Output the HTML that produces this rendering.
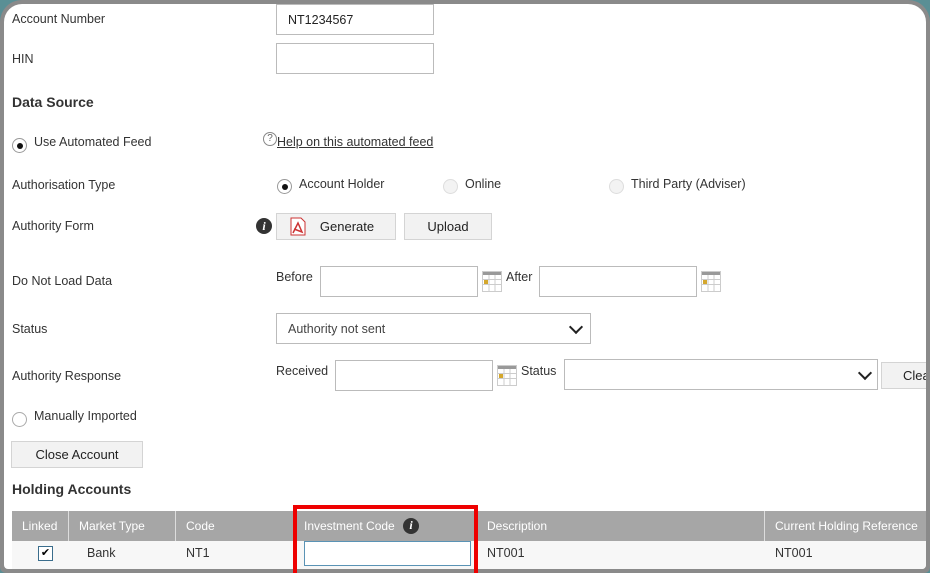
<!DOCTYPE html>
<html><head><style>
html,body{margin:0;width:930px;height:573px;overflow:hidden}
body{background:#5a8f95;font-family:"Liberation Sans",sans-serif;font-size:12.5px;color:#333;position:relative}
#f{position:absolute;left:0;top:0;width:930px;height:573px;background:#8a8a8a;border-radius:22px 22px 6px 6px;}
#p{position:absolute;left:4px;top:4px;width:922px;height:565px;background:#fff;border-radius:18px 18px 4px 4px;overflow:hidden;}
.a{position:absolute;white-space:nowrap}
.in{position:absolute;border:1px solid #bbb;background:#fff;box-sizing:border-box}
.btn{position:absolute;border:1px solid #d4d4d4;background:#f2f2f2;box-sizing:border-box;text-align:center;color:#222;font-size:13px}
.h{font-weight:bold;font-size:14px;color:#333}
.r{position:absolute;width:15px;height:15px;border:1px solid #999;border-radius:50%;box-sizing:border-box;background:#fff}
.r.on::after{content:"";position:absolute;left:3.5px;top:3.5px;width:6px;height:6px;border-radius:50%;background:#111}
.r.dis{border-color:#ddd;background:#f3f3f3}
.cal{position:absolute;width:20px;height:21px}
.th{position:absolute;top:507px;height:30px;background:#a6a6a6;color:#fff;line-height:30px;font-size:12px;border-right:1px solid #ddd;box-sizing:border-box;padding-left:10px}
.chev{position:absolute;width:8px;height:8px;border-right:2px solid #222;border-bottom:2px solid #222;transform:rotate(45deg)}
</style></head><body>
<div id="f"></div>
<svg width="0" height="0" style="position:absolute"><defs><g id="c"><rect x="0.5" y="0.5" width="19" height="20" fill="#fff" stroke="#ccc"/><rect x="1" y="1" width="18" height="3" fill="#999"/><path d="M1 8.5H19M1 13.5H19M7 4V20M13 4V20" stroke="#ccc"/><rect x="2" y="9" width="4" height="4" fill="#d4a72c"/></g></defs></svg>
<div id="p">
<div class="a" style="left:8px;top:8px">Account Number</div>
<div class="in" style="left:272px;top:0px;width:158px;height:31px;padding:8px 0 0 11px;color:#222">NT1234567</div>
<div class="a" style="left:8px;top:48px">HIN</div>
<div class="in" style="left:272px;top:39px;width:158px;height:31px"></div>
<div class="a h" style="left:8px;top:90px">Data Source</div>
<div class="r on" style="left:8px;top:134px"></div>
<div class="a" style="left:30px;top:131px">Use Automated Feed</div>
<div class="a" style="left:259px;top:128px;width:12px;height:12px;border:1px solid #888;border-radius:50%;font-size:10px;line-height:12px;text-align:center;color:#666">?</div>
<div class="a" style="left:273px;top:131px;text-decoration:underline;color:#333">Help on this automated feed</div>
<div class="a" style="left:8px;top:174px">Authorisation Type</div>
<div class="r on" style="left:273px;top:175px"></div>
<div class="a" style="left:295px;top:173px">Account Holder</div>
<div class="r dis" style="left:439px;top:175px"></div>
<div class="a" style="left:461px;top:173px">Online</div>
<div class="r dis" style="left:605px;top:175px"></div>
<div class="a" style="left:627px;top:173px">Third Party (Adviser)</div>
<div class="a" style="left:8px;top:215px">Authority Form</div>
<div class="a" style="left:252px;top:214px;width:16px;height:16px;border-radius:50%;background:#333;color:#fff;font:bold italic 12px 'Liberation Serif',serif;text-align:center;line-height:16px">i</div>
<div class="btn" style="left:272px;top:209px;width:120px;height:27px;line-height:25px;padding-left:22px">Generate</div>
<svg class="a" style="left:285px;top:213px" width="18" height="19"><path d="M2 1H12L16 5V18H2Z" fill="#fff" stroke="#c33"/><path d="M4 16L9 6L13 15L5 12" fill="none" stroke="#c33" stroke-width="1.5"/></svg>
<div class="btn" style="left:400px;top:209px;width:88px;height:27px;line-height:25px">Upload</div>
<div class="a" style="left:8px;top:270px">Do Not Load Data</div>
<div class="a" style="left:272px;top:266px">Before</div>
<div class="in" style="left:316px;top:262px;width:158px;height:31px"></div>
<svg class="cal" style="left:478px;top:267px"><use href="#c"/></svg>
<div class="a" style="left:502px;top:266px">After</div>
<div class="in" style="left:535px;top:262px;width:158px;height:31px"></div>
<svg class="cal" style="left:697px;top:267px"><use href="#c"/></svg>
<div class="a" style="left:8px;top:318px">Status</div>
<div class="in" style="left:272px;top:309px;width:315px;height:31px;padding:8px 0 0 11px;color:#444">Authority not sent</div>
<div class="chev" style="left:567px;top:318px"></div>
<div class="a" style="left:8px;top:365px">Authority Response</div>
<div class="a" style="left:272px;top:360px">Received</div>
<div class="in" style="left:331px;top:356px;width:158px;height:31px"></div>
<svg class="cal" style="left:493px;top:361px"><use href="#c"/></svg>
<div class="a" style="left:517px;top:360px">Status</div>
<div class="in" style="left:560px;top:355px;width:314px;height:31px"></div>
<div class="chev" style="left:856px;top:364px"></div>
<div class="btn" style="left:877px;top:358px;width:60px;height:27px;line-height:25px;text-align:left;padding-left:21px">Clear</div>
<div class="r" style="left:8px;top:408px;border-color:#aaa"></div>
<div class="a" style="left:30px;top:405px">Manually Imported</div>
<div class="btn" style="left:7px;top:437px;width:132px;height:27px;line-height:26px">Close Account</div>
<div class="a h" style="left:8px;top:477px">Holding Accounts</div>
<div class="th" style="left:8px;width:57px">Linked</div>
<div class="th" style="left:65px;width:107px">Market Type</div>
<div class="th" style="left:172px;width:118px">Code</div>
<div class="th" style="left:290px;width:183px">Investment Code</div>
<div class="a" style="left:399px;top:514px;width:16px;height:16px;border-radius:50%;background:#333;color:#fff;text-align:center;line-height:16px;font:bold italic 12px 'Liberation Serif',serif">i</div>
<div class="th" style="left:473px;width:288px">Description</div>
<div class="th" style="left:761px;width:170px">Current Holding Reference</div>
<div class="a" style="left:8px;top:537px;width:922px;height:28px;background:#f7f7f7;border-bottom:1px solid #ddd"></div>
<div class="a" style="left:34px;top:542px;width:13px;height:13px;border:1px solid #3a6d8c;background:#fff;font-size:11px;line-height:13px;text-align:center;color:#000">✔</div>
<div class="a" style="left:83px;top:542px">Bank</div>
<div class="a" style="left:182px;top:542px">NT1</div>
<div class="a" style="left:300px;top:537px;width:165px;height:23px;border:1px solid #5a93b5;background:#fff"></div>
<div class="a" style="left:483px;top:542px">NT001</div>
<div class="a" style="left:771px;top:542px">NT001</div>
</div>
<div style="position:absolute;left:293px;top:505px;width:185px;height:68px;border:4px solid #e00;border-bottom:none;box-sizing:border-box"></div>
</body></html>
